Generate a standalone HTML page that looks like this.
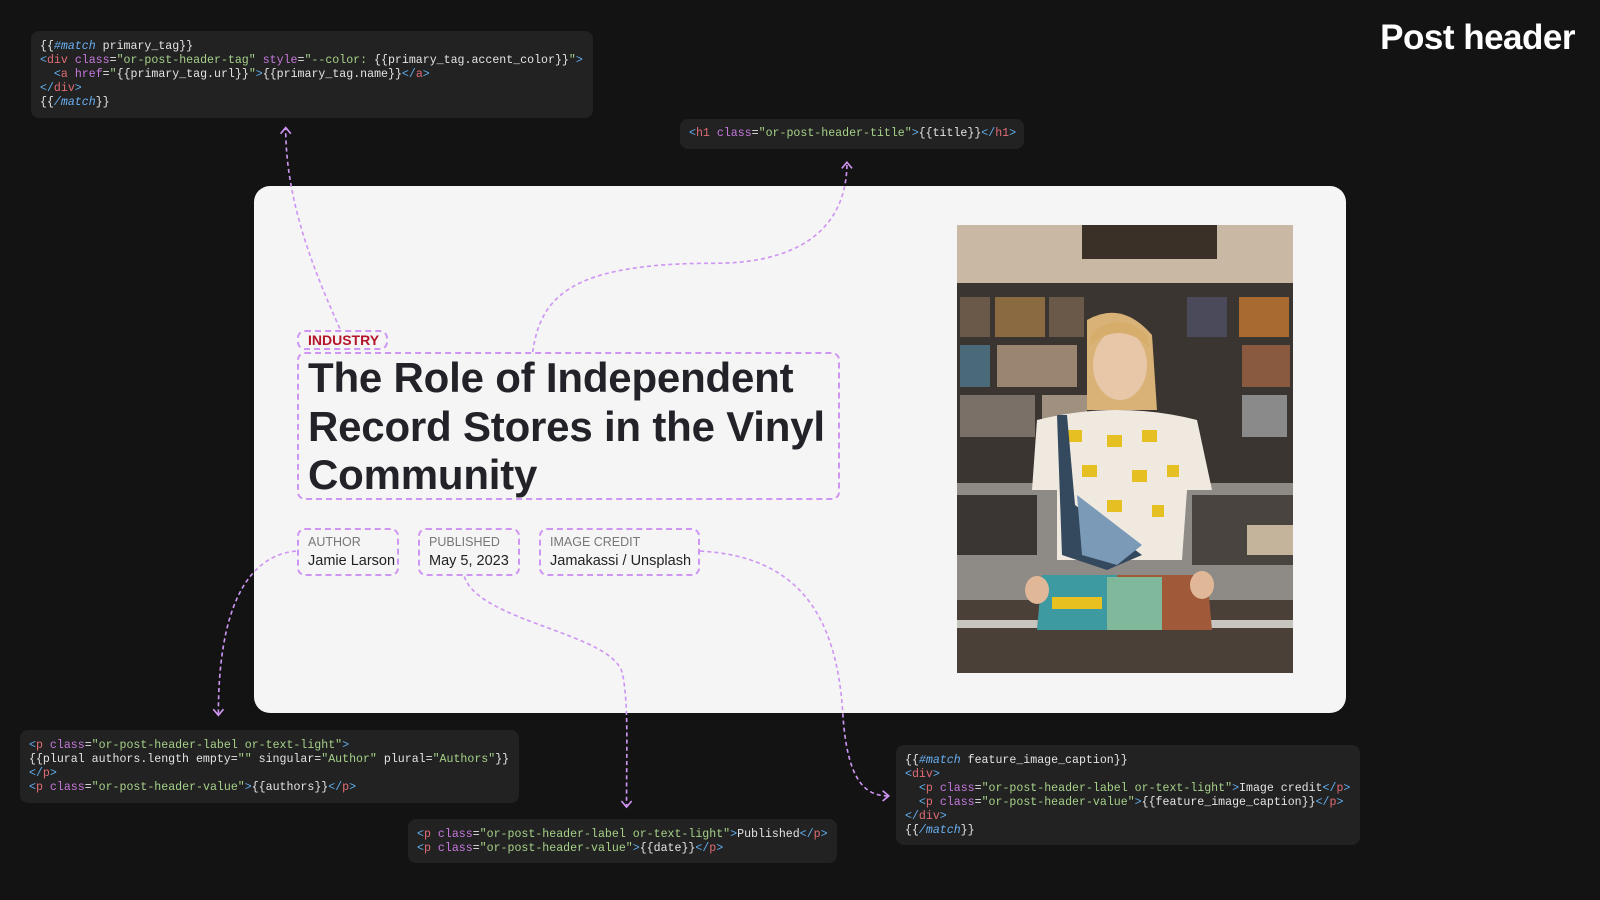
<!DOCTYPE html>
<html><head><meta charset="utf-8"><style>
*{margin:0;padding:0;box-sizing:border-box}
body{width:1600px;height:900px;background:#131313;position:relative;overflow:hidden;font-family:"Liberation Sans",sans-serif}
.code{position:absolute;background:#222222;border-radius:8px;font-family:"Liberation Mono",monospace;font-size:11.6px;line-height:14px;color:#e4e4e4;padding:9px 9px;white-space:pre}
.t{color:#e06c75}.a{color:#c678dd}.s{color:#a6d189}.p{color:#61afef}.m{color:#6ab0f3;font-style:italic}
.title{position:absolute;right:25px;top:18px;color:#fff;font-size:35px;font-weight:bold;letter-spacing:-0.5px}
.card{position:absolute;left:254px;top:186px;width:1092px;height:527px;background:#f5f5f5;border-radius:16px}
.dash{position:absolute;border:2px dashed #cf95f2;border-radius:8px}
.tag{left:43px;top:144px;width:91px;height:20px;color:#b5152b;font-weight:bold;font-size:14px;padding:0 0 0 9px;line-height:17px}
.h1{left:43px;top:166px;width:543px;height:148px;font-size:42px;font-weight:bold;color:#222228;line-height:48.5px;padding:0 0 0 9px;letter-spacing:-0.2px}
.meta{top:342px;height:48px;padding:4px 0 0 9px}
.meta .l{font-size:12.5px;color:#777;line-height:16px}
.meta .v{font-size:14.5px;color:#222;line-height:20px;margin-top:1px}
.img{position:absolute;left:703px;top:39px;width:336px;height:448px;overflow:hidden}
svg.ar{position:absolute;left:0;top:0}
</style></head><body>
<div class="title">Post header</div>

<div class="code" style="left:31px;top:31px;width:562px;height:87px">{{<span class="m">#match</span> primary_tag}}
<span class="p">&lt;</span><span class="t">div</span> <span class="a">class</span>=<span class="s">"or-post-header-tag"</span> <span class="a">style</span>=<span class="s">"--color: </span>{{primary_tag.accent_color}}<span class="s">"</span><span class="p">&gt;</span>
  <span class="p">&lt;</span><span class="t">a</span> <span class="a">href</span>=<span class="s">"</span>{{primary_tag.url}}<span class="s">"</span><span class="p">&gt;</span>{{primary_tag.name}}<span class="p">&lt;/</span><span class="t">a</span><span class="p">&gt;</span>
<span class="p">&lt;/</span><span class="t">div</span><span class="p">&gt;</span>
{{<span class="m">/match</span>}}</div>

<div class="code" style="left:680px;top:119px;width:344px;height:30px;padding-top:8px"><span class="p">&lt;</span><span class="t">h1</span> <span class="a">class</span>=<span class="s">"or-post-header-title"</span><span class="p">&gt;</span>{{title}}<span class="p">&lt;/</span><span class="t">h1</span><span class="p">&gt;</span></div>

<div class="card">
  <div class="dash tag">INDUSTRY</div>
  <div class="dash h1">The Role of Independent Record Stores in the Vinyl Community</div>
  <div class="dash meta" style="left:43px;width:102px"><div class="l">AUTHOR</div><div class="v">Jamie Larson</div></div>
  <div class="dash meta" style="left:164px;width:102px"><div class="l">PUBLISHED</div><div class="v">May 5, 2023</div></div>
  <div class="dash meta" style="left:285px;width:161px"><div class="l">IMAGE CREDIT</div><div class="v">Jamakassi / Unsplash</div></div>
  <div class="img"><svg width="336" height="448" viewBox="0 0 336 448">
    <rect width="336" height="448" fill="#5a4d44"/>
    <rect width="336" height="58" fill="#c9b8a4"/>
    <rect x="125" y="0" width="135" height="34" fill="#3a3028"/>
    <rect x="0" y="58" width="336" height="200" fill="#3b3532"/>
    <g fill="#6a5848"><rect x="3" y="72" width="30" height="40"/><rect x="38" y="72" width="50" height="40" fill="#8a6a40"/><rect x="92" y="72" width="35" height="40"/><rect x="230" y="72" width="40" height="40" fill="#4a4a5a"/><rect x="282" y="72" width="50" height="40" fill="#a86a30"/><rect x="3" y="120" width="30" height="42" fill="#4a6a7a"/><rect x="40" y="120" width="80" height="42" fill="#9a8670"/><rect x="285" y="120" width="48" height="42" fill="#8a5a40"/><rect x="3" y="170" width="75" height="42" fill="#7a7068"/><rect x="85" y="170" width="45" height="42" fill="#a09080"/><rect x="285" y="170" width="45" height="42" fill="#8a8a8a"/></g>
    <rect x="0" y="258" width="336" height="190" fill="#8e8a86"/>
    <rect x="0" y="270" width="80" height="60" fill="#3a3634"/>
    <rect x="235" y="270" width="101" height="70" fill="#4a4440"/>
    <rect x="290" y="300" width="46" height="30" fill="#c4b49c"/>
    <rect x="0" y="375" width="336" height="73" fill="#4a4038"/>
    <rect x="0" y="395" width="336" height="8" fill="#c8c4c0"/>
    <path d="M130 95 Q165 75 195 110 L200 185 L130 185 Z" fill="#d9b277"/>
    <ellipse cx="163" cy="140" rx="27" ry="35" fill="#e8c6a8"/>
    <path d="M133 120 Q163 95 192 122 L190 110 Q163 85 135 108 Z" fill="#d7ad6c"/>
    <path d="M80 195 Q160 175 240 195 L255 265 L230 265 L225 335 L100 335 L100 265 L75 265 Z" fill="#efe9e0"/>
    <g fill="#e6bf22"><rect x="110" y="205" width="15" height="12"/><rect x="150" y="210" width="15" height="12"/><rect x="185" y="205" width="15" height="12"/><rect x="125" y="240" width="15" height="12"/><rect x="175" y="245" width="15" height="12"/><rect x="210" y="240" width="12" height="12"/><rect x="150" y="275" width="15" height="12"/><rect x="195" y="280" width="12" height="12"/></g>
    <path d="M100 190 L110 190 L118 280 L185 330 L150 345 L105 330 Z" fill="#34485e"/>
    <path d="M120 270 L185 320 L160 340 L125 330 Z" fill="#7a9ab8"/>
    <path d="M85 350 L250 350 L255 405 L80 405 Z" fill="#a05a3a"/>
    <path d="M85 350 L160 350 L155 405 L80 405 Z" fill="#3d9aa0"/>
    <rect x="95" y="372" width="50" height="12" fill="#e8c020"/>
    <rect x="150" y="352" width="55" height="53" fill="#7fb89a"/>
    <ellipse cx="80" cy="365" rx="12" ry="14" fill="#e0b898"/><ellipse cx="245" cy="360" rx="12" ry="14" fill="#e0b898"/>
  </svg></div>
</div>

<div class="code" style="left:20px;top:730px;width:499px;height:73px"><span class="p">&lt;</span><span class="t">p</span> <span class="a">class</span>=<span class="s">"or-post-header-label or-text-light"</span><span class="p">&gt;</span>
{{plural authors.length empty=<span class="s">""</span> singular=<span class="s">"Author"</span> plural=<span class="s">"Authors"</span>}}
<span class="p">&lt;/</span><span class="t">p</span><span class="p">&gt;</span>
<span class="p">&lt;</span><span class="t">p</span> <span class="a">class</span>=<span class="s">"or-post-header-value"</span><span class="p">&gt;</span>{{authors}}<span class="p">&lt;/</span><span class="t">p</span><span class="p">&gt;</span></div>

<div class="code" style="left:408px;top:819px;width:429px;height:44px"><span class="p">&lt;</span><span class="t">p</span> <span class="a">class</span>=<span class="s">"or-post-header-label or-text-light"</span><span class="p">&gt;</span>Published<span class="p">&lt;/</span><span class="t">p</span><span class="p">&gt;</span>
<span class="p">&lt;</span><span class="t">p</span> <span class="a">class</span>=<span class="s">"or-post-header-value"</span><span class="p">&gt;</span>{{date}}<span class="p">&lt;/</span><span class="t">p</span><span class="p">&gt;</span></div>

<div class="code" style="left:896px;top:745px;width:464px;height:100px">{{<span class="m">#match</span> feature_image_caption}}
<span class="p">&lt;</span><span class="t">div</span><span class="p">&gt;</span>
  <span class="p">&lt;</span><span class="t">p</span> <span class="a">class</span>=<span class="s">"or-post-header-label or-text-light"</span><span class="p">&gt;</span>Image credit<span class="p">&lt;/</span><span class="t">p</span><span class="p">&gt;</span>
  <span class="p">&lt;</span><span class="t">p</span> <span class="a">class</span>=<span class="s">"or-post-header-value"</span><span class="p">&gt;</span>{{feature_image_caption}}<span class="p">&lt;/</span><span class="t">p</span><span class="p">&gt;</span>
<span class="p">&lt;/</span><span class="t">div</span><span class="p">&gt;</span>
{{<span class="m">/match</span>}}</div>

<svg class="ar" width="1600" height="900"><g transform="scale(1.0204)" fill="none" stroke="#cf95f2" stroke-width="1.6" stroke-dasharray="4 3">
<path d="M333,322 C310,270 280,200 280,126"/><path d="M275,131 L280,125 L285,131" stroke-dasharray="none"/>
<path d="M522,345 C530,290 560,258 700,258 C800,258 830,210 830,160"/><path d="M825,165 L830,159 L835,165" stroke-dasharray="none"/>
<path d="M290,540 C240,545 214,600 214,700"/><path d="M209,695 L214,701 L219,695" stroke-dasharray="none"/>
<path d="M455,565 C470,610 600,620 610,660 C616,690 614,730 614,790"/><path d="M609,785 L614,791 L619,785" stroke-dasharray="none"/>
<path d="M686,540 C780,545 820,600 826,700 C830,760 845,780 870,780"/><path d="M865,775 L871,780 L865,785" stroke-dasharray="none"/>
</g></svg>
</body></html>
